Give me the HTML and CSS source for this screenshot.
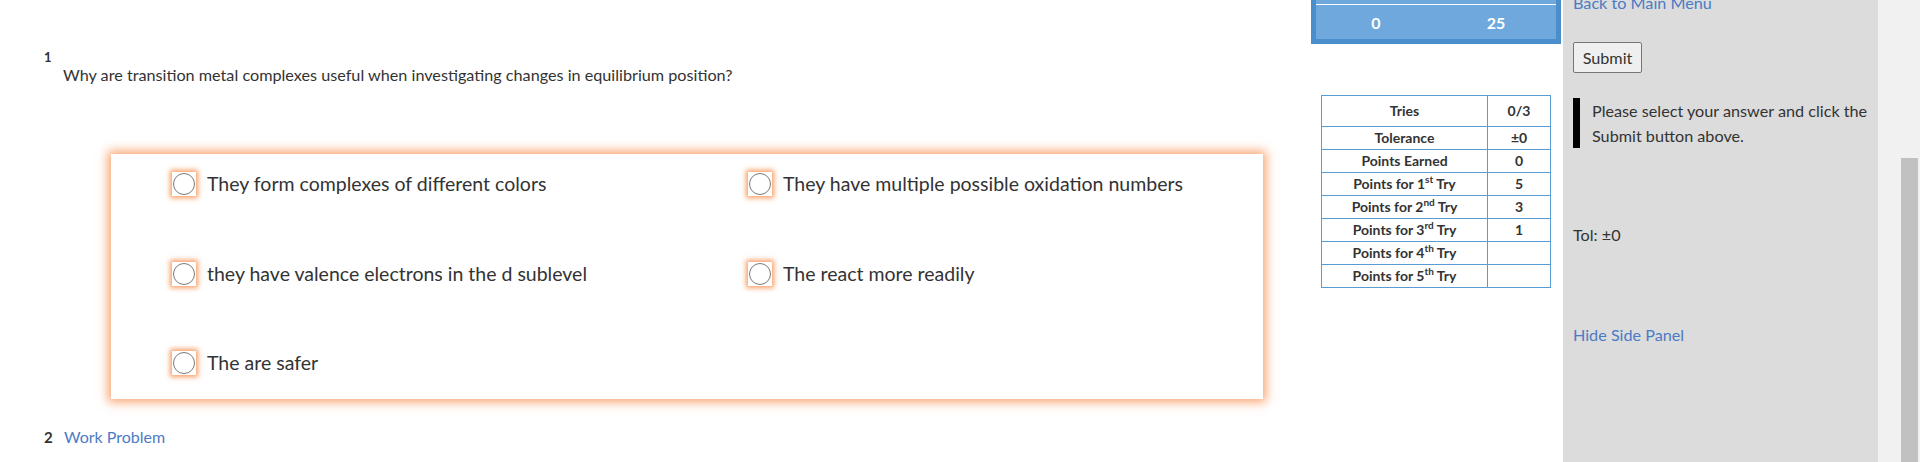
FILE: index.html
```html
<!DOCTYPE html>
<html lang="en">
<head>
<meta charset="utf-8">
<title>Question</title>
<link rel="stylesheet" href="styles.css">
</head>
<body>
<div class="page">
  <main class="content">
    <div class="qnum">1</div>
    <p class="qtext">Why are transition metal complexes useful when investigating changes in equilibrium position?</p>
    <div class="options">
      <label class="opt"><span class="radio"><span class="ring"></span></span><span class="otext">They form complexes of different colors</span></label>
      <label class="opt"><span class="radio"><span class="ring"></span></span><span class="otext">They have multiple possible oxidation numbers</span></label>
      <label class="opt"><span class="radio"><span class="ring"></span></span><span class="otext">they have valence electrons in the d sublevel</span></label>
      <label class="opt"><span class="radio"><span class="ring"></span></span><span class="otext">The react more readily</span></label>
      <label class="opt"><span class="radio"><span class="ring"></span></span><span class="otext">The are safer</span></label>
    </div>
    <div class="next"><span class="nnum">2</span><a class="link" href="#">Work Problem</a></div>
  </main>
  <aside class="scores">
    <div class="scorebox">
      <div class="scorerow"><span class="scell">0</span><span class="scell">25</span></div>
    </div>
    <table class="tries">
      <tr class="first"><td class="lbl">Tries</td><td class="val">0/3</td></tr>
      <tr><td class="lbl">Tolerance</td><td class="val">±0</td></tr>
      <tr><td class="lbl">Points Earned</td><td class="val">0</td></tr>
      <tr><td class="lbl">Points for 1<sup>st</sup> Try</td><td class="val">5</td></tr>
      <tr><td class="lbl">Points for 2<sup>nd</sup> Try</td><td class="val">3</td></tr>
      <tr><td class="lbl">Points for 3<sup>rd</sup> Try</td><td class="val">1</td></tr>
      <tr><td class="lbl">Points for 4<sup>th</sup> Try</td><td class="val"></td></tr>
      <tr><td class="lbl">Points for 5<sup>th</sup> Try</td><td class="val"></td></tr>
    </table>
  </aside>
  <div class="spacer"></div>
  <aside class="side">
    <a class="link back" href="#">Back to Main Menu</a>
    <button class="submit" type="button">Submit</button>
    <div class="msg">Please select your answer and click the Submit button above.</div>
    <div class="tol">Tol: ±0</div>
    <a class="link hide" href="#">Hide Side Panel</a>
  </aside>
  <div class="track"><div class="thumb"></div></div>
</div>
</body>
</html>
```
FILE: styles.css
```css
html, body {
  margin: 0;
  padding: 0;
  background: #fff;
}
body {
  font-family: Lato, "Open Sans", sans-serif;
  color: #333;
  overflow: hidden;
}
.page {
  display: grid;
  grid-template-columns: 1311px 250px 2px 315px 42px;
  height: 462px;
}
.content {
  padding-left: 44px;
}
.qnum {
  font-weight: 700;
  font-size: 13px;
  line-height: 16px;
  margin-top: 49px;
}
.qtext {
  margin: 0 0 0 19px;
  font-size: 16.2px;
  line-height: 20px;
}
.options {
  margin: 69px 0 0 67px;
  width: 1152px;
  height: 245px;
  box-sizing: border-box;
  background: #fff;
  box-shadow: 0 0 10px 3px rgba(245, 130, 60, 0.75);
  display: grid;
  grid-template-columns: 576px 576px;
  align-content: start;
  row-gap: 65.5px;
  padding: 18px 0 24px;
}
.opt {
  display: flex;
  align-items: center;
  padding-left: 61px;
  height: 24px;
}
.radio {
  width: 24px;
  height: 24px;
  background: #fff;
  box-shadow: 0 0 5px 2px rgba(245, 130, 60, 0.8);
  display: flex;
  align-items: center;
  justify-content: center;
  flex: none;
}
.ring {
  width: 20px;
  height: 20px;
  border: 1.3px solid #7a7a7a;
  border-radius: 50%;
}
.otext {
  margin-left: 11px;
  font-size: 19.5px;
  line-height: 24px;
}
.next {
  margin-top: 28px;
  display: flex;
  align-items: center;
  font-size: 16px;
  line-height: 20px;
}
.nnum {
  font-weight: 700;
  font-size: 15px;
  width: 20px;
}
.link {
  color: #4b7bc4;
  text-decoration: none;
}
.scorebox {
  border: 5px solid #4a8fcc;
  border-top: 0;
  background: #6fa8dc;
  padding-top: 4px;
}
.scorerow {
  display: flex;
  border-top: 1px solid #fff;
  height: 34px;
  align-items: center;
}
.scell {
  flex: 1;
  text-align: center;
  color: #fff;
  font-weight: 700;
  font-size: 16px;
}
.tries {
  margin: 51px 0 0 10px;
  width: 230px;
  border-collapse: collapse;
  font-size: 14px;
  font-weight: 700;
}
.tries td {
  border: 1px solid #5b9bd5;
  text-align: center;
  padding: 0;
  height: 22px;
  line-height: 16px;
}
.tries tr.first td {
  height: 30px;
}
.tries .val {
  width: 62px;
}
.tries sup {
  font-size: 10px;
  line-height: 0;
}
.side {
  background: #dcdcdc;
  padding-left: 10px;
  display: flex;
  flex-direction: column;
  align-items: flex-start;
  font-size: 16.2px;
  line-height: 20px;
}
.back {
  margin-top: -7px;
}
.submit {
  margin-top: 29px;
  width: 69px;
  height: 31px;
  font: inherit;
  color: #333;
  background: #efefef;
  border: 1px solid #767676;
  border-radius: 2px;
  padding: 0;
}
.msg {
  margin-top: 25px;
  border-left: 7px solid #000;
  padding-left: 12px;
  line-height: 25px;
  width: 295px;
  box-sizing: border-box;
}
.tol {
  margin-top: 77px;
}
.hide {
  margin-top: 80px;
}
.track {
  background: #f1f1f1;
  display: flex;
  justify-content: flex-end;
  padding-right: 2px;
}
.thumb {
  width: 17px;
  margin-top: 158px;
  background: #c1c1c1;
}
```
